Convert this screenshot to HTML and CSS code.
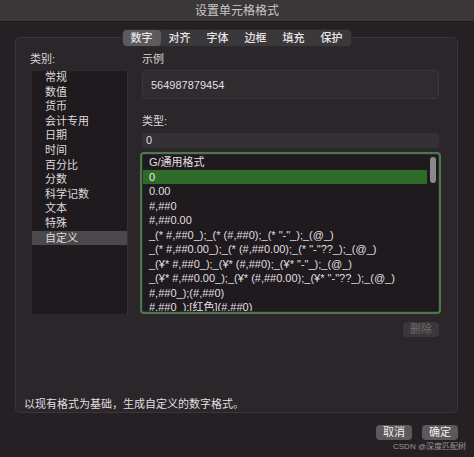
FILE: index.html
```html
<!DOCTYPE html>
<html lang="zh">
<head>
<meta charset="utf-8">
<title>设置单元格格式</title>
<link rel="stylesheet" href="styles.css">
</head>
<body>
<div class="titlebar">设置单元格格式</div>
<div class="main">
  <div class="tabs">
    <div class="tab active">数字</div>
    <div class="tab">对齐</div>
    <div class="tab">字体</div>
    <div class="tab">边框</div>
    <div class="tab">填充</div>
    <div class="tab">保护</div>
  </div>
  <div class="group">
    <div class="cols">
      <div class="left">
        <div class="label">类别:</div>
        <div class="catlist">
          <div class="cat"><span class="cattext">常规</span></div>
          <div class="cat"><span class="cattext">数值</span></div>
          <div class="cat"><span class="cattext">货币</span></div>
          <div class="cat"><span class="cattext">会计专用</span></div>
          <div class="cat"><span class="cattext">日期</span></div>
          <div class="cat"><span class="cattext">时间</span></div>
          <div class="cat"><span class="cattext">百分比</span></div>
          <div class="cat"><span class="cattext">分数</span></div>
          <div class="cat"><span class="cattext">科学记数</span></div>
          <div class="cat"><span class="cattext">文本</span></div>
          <div class="cat"><span class="cattext">特殊</span></div>
          <div class="cat selected"><span class="cattext">自定义</span></div>
        </div>
      </div>
      <div class="right">
        <div class="label">示例</div>
        <div class="sample">564987879454</div>
        <div class="label type-label">类型:</div>
        <div class="typeinput">0</div>
        <div class="fmtlist">
          <div class="fmt">G/通用格式</div>
          <div class="fmt selected">0</div>
          <div class="fmt">0.00</div>
          <div class="fmt">#,##0</div>
          <div class="fmt">#,##0.00</div>
          <div class="fmt">_(* #,##0_);_(* (#,##0);_(* "-"_);_(@_)</div>
          <div class="fmt">_(* #,##0.00_);_(* (#,##0.00);_(* "-"??_);_(@_)</div>
          <div class="fmt">_(¥* #,##0_);_(¥* (#,##0);_(¥* "-"_);_(@_)</div>
          <div class="fmt">_(¥* #,##0.00_);_(¥* (#,##0.00);_(¥* "-"??_);_(@_)</div>
          <div class="fmt">#,##0_);(#,##0)</div>
          <div class="fmt">#,##0_);[红色](#,##0)</div>
          <div class="scrollthumb"></div>
        </div>
        <div class="delrow"><div class="btn disabled">删除</div></div>
      </div>
    </div>
    <div class="hint">以现有格式为基础，生成自定义的数字格式。</div>
  </div>
  <div class="buttons">
    <div class="btn">取消</div>
    <div class="btn">确定</div>
  </div>
  <div class="watermark">CSDN @深度匹配树</div>
</div>
</body>
</html>
```
FILE: styles.css
```css
* { box-sizing: border-box; }
html, body {
  margin: 0;
  padding: 0;
  background: #242023;
  width: 474px;
  height: 457px;
  overflow: hidden;
  font-family: "Liberation Sans", "Noto Sans CJK SC", sans-serif;
  font-size: 11px;
  color: #dedbde;
}
.titlebar {
  height: 22px;
  line-height: 22px;
  text-align: center;
  background: #3a3739;
  border-bottom: 1px solid #1c191b;
  color: #cbc8cb;
  font-size: 12px;
}
.main {
  padding: 8px 16px 0 15px;
}
.tabs {
  position: relative;
  z-index: 1;
  display: flex;
  width: 228px;
  height: 16px;
  margin: 0 auto -9px;
  background: #3b383b;
  border-radius: 4px;
  box-shadow: 0 0 0 1px #2e2b2e;
}
.tab {
  flex: 1;
  text-align: center;
  line-height: 16px;
  color: #e8e5e8;
  border-radius: 4px;
  font-weight: 500;
}
.tab.active {
  background: #5d5a5d;
}
.group {
  height: 376px;
  border: 1px solid #393538;
  border-radius: 5px;
  background: #2a2629;
  display: flex;
  flex-direction: column;
}
.cols {
  display: flex;
  gap: 14px;
  padding: 14px 18px 0 14px;
}
.left {
  width: 98px;
  flex: none;
}
.right {
  flex: 1;
  display: flex;
  flex-direction: column;
}
.label {
  height: 14px;
  line-height: 14px;
  color: #dad7da;
}
.catlist {
  margin: 4px 0 0 1px;
  height: 245px;
  background: #1e1a1d;
  border: 1px solid #2c282b;
  border-right-color: #353134;
  display: flex;
  flex-direction: column;
}
.cat {
  display: flex;
  align-items: center;
  height: 14.6px;
  line-height: 14.6px;
  padding-left: 13px;
}
.cat:first-child { margin-top: -1px; }
.cat.selected {
  background: #4b484b;
}
.sample {
  margin-top: 4px;
  height: 29px;
  line-height: 29px;
  padding-left: 8px;
  background: #2f2b2e;
  border: 1px solid #3a3639;
  border-radius: 4px;
  color: #e2dfe2;
}
.type-label {
  margin-top: 15px;
}
.typeinput {
  margin-top: 5px;
  height: 15px;
  line-height: 15px;
  padding-left: 4px;
  background: #343134;
  border-radius: 2px;
}
.fmtlist {
  position: relative;
  margin-top: 6px;
  height: 158px;
  background: #1e1a1d;
  border: 1px solid #2c282b;
  border-radius: 2px;
  box-shadow: 0 0 0 2px #4b7a4a;
  overflow: hidden;
  padding-right: 11px;
}
.fmt {
  height: 14.5px;
  line-height: 14.5px;
  padding-left: 6px;
  white-space: nowrap;
  color: #e2dfe2;
}
.fmt.selected {
  background: #2e6a29;
  color: #f0f0f0;
}
.scrollthumb {
  position: absolute;
  left: 287px;
  top: 2px;
  width: 6px;
  height: 26px;
  border-radius: 3px;
  background: #8b888b;
}
.delrow {
  margin-top: 10px;
  display: flex;
  justify-content: flex-end;
}
.btn {
  width: 36px;
  height: 15px;
  line-height: 15px;
  text-align: center;
  border-radius: 4px;
  background: #5c595c;
  color: #eeeeee;
}
.btn.disabled {
  background: #3a373a;
  color: #6f6c6f;
}
.hint {
  margin-top: auto;
  margin-bottom: 1px;
  padding-left: 8px;
  height: 14px;
  line-height: 14px;
  color: #e2dfe2;
}
.buttons {
  margin-top: 12px;
  display: flex;
  justify-content: flex-end;
  gap: 10px;
}
.watermark {
  margin-top: 2px;
  margin-right: -8px;
  text-align: right;
  font-size: 8px;
  line-height: 10px;
  color: #9a989a;
}
```
